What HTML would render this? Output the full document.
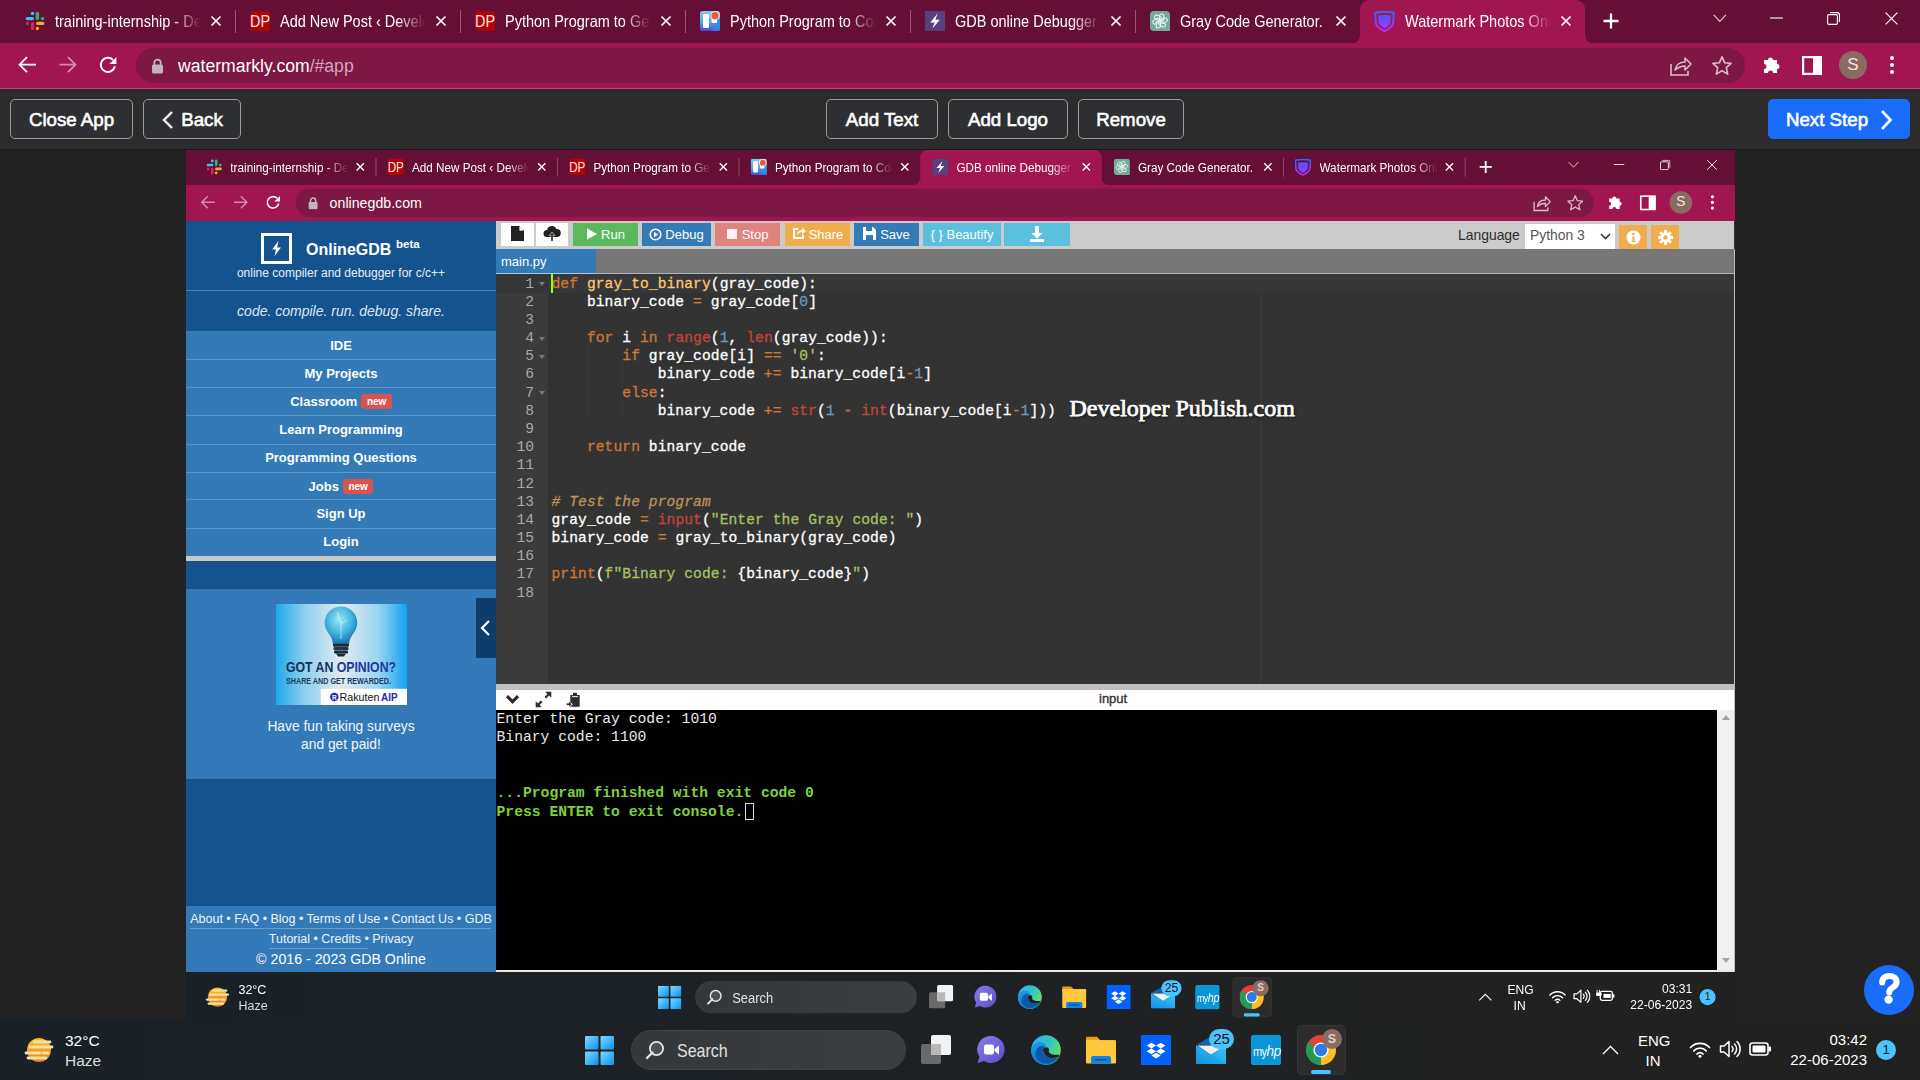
<!DOCTYPE html>
<html><head><meta charset="utf-8"><title>recreation</title>
<style>
*{box-sizing:border-box;margin:0;padding:0}
html,body{width:1920px;height:1080px;overflow:hidden;background:#222;font-family:"Liberation Sans",sans-serif}
.abs{position:absolute}
.ic{position:absolute}
.scr{position:absolute;left:0;top:0;width:1920px;height:1080px;overflow:hidden}
.tabstrip{position:absolute;left:0;top:0;width:1920px;height:43px;background:#650e36}
.tab{position:absolute;top:0;height:42px;width:225px}
.tab .fav{position:absolute;left:15px;top:11px;width:20px;height:20px}
.tab .ttl{position:absolute;left:45px;top:11px;width:146px;height:22px;overflow:hidden;white-space:nowrap;color:#fff;font-size:16.4px;line-height:20px;
  -webkit-mask-image:linear-gradient(90deg,#000 80%,transparent 100%)}
.tab .ttl span{display:inline-block;transform:scaleX(0.885);transform-origin:0 0}
.tab .x{position:absolute;left:199px;top:14px;width:14px;height:14px}
.tab .sep{position:absolute;left:0px;top:10px;width:1px;height:23px;background:#9b5a78}
.tab.active{background:#a11550;border-radius:9px 9px 0 0;height:44px}
.tab.active:before,.tab.active:after{content:"";position:absolute;bottom:0;width:9px;height:9px}
.tab.active:before{left:-9px;background:radial-gradient(circle at 0 0,transparent 8.5px,#a11550 9px)}
.tab.active:after{right:-9px;background:radial-gradient(circle at 100% 0,transparent 8.5px,#a11550 9px)}
.toolbar{position:absolute;left:0;top:43px;width:1920px;height:45px;background:#a11550}
.tbline{position:absolute;left:0;top:88px;width:1920px;height:1px;background:#c04479}
.omni{position:absolute;left:136px;top:5px;width:1609px;height:35px;border-radius:18px;background:#7c1843}
.url{position:absolute;left:178px;top:12px;font-size:17.6px;color:#fff;line-height:22px;white-space:nowrap}
.url span{color:#d4a5ba}
.taskbar{position:absolute;left:0;top:1020px;width:1920px;height:60px;background:linear-gradient(90deg,#1a2126 0%,#1c2125 35%,#202122 65%,#212121 100%)}
.tb-txt{position:absolute;color:#fff;font-size:15px;line-height:19px;white-space:nowrap}
.btn{position:absolute;top:10px;height:40px;border:1px solid #9c9c9c;border-radius:5px;background:#2e2f32;color:#fff;font-size:18.7px;font-weight:400;-webkit-text-stroke:0.6px #fff;line-height:39px;text-align:center;white-space:nowrap}
</style></head>
<body>
<div class="scr" id="outer">
<div class="tabstrip">
<div class="tab" style="left:10px"><svg class="fav" viewBox="0 0 20 20"><g stroke-linecap="round" stroke-width="3.3"><path d="M2.3 7.6h5" stroke="#36c5f0"/><path d="M12.4 2.3v5" stroke="#2eb67d"/><path d="M12.7 12.4h5" stroke="#ecb22e"/><path d="M7.6 12.7v5" stroke="#e01e5a"/></g><circle cx="7.6" cy="2.5" r="1.7" fill="#36c5f0"/><circle cx="17.5" cy="7.6" r="1.7" fill="#2eb67d"/><circle cx="12.4" cy="17.5" r="1.7" fill="#ecb22e"/><circle cx="2.5" cy="12.4" r="1.7" fill="#e01e5a"/></svg><div class="ttl"><span>training-internship - Dev</span></div><svg class="x" viewBox="0 0 14 14"><path d="M2.5 2.5l9 9M11.5 2.5l-9 9" stroke="#fff" stroke-width="1.7"/></svg></div>
<div class="tab" style="left:235px"><div class="sep"></div><svg class="fav" viewBox="0 0 20 20" overflow="visible"><rect width="20" height="20" rx="2.5" fill="#b00506"/><text x="0" y="16.2" font-size="17" fill="#ffe4e4" font-family="Liberation Sans" textLength="20" lengthAdjust="spacingAndGlyphs">DP</text></svg><div class="ttl"><span>Add New Post ‹ Develop</span></div><svg class="x" viewBox="0 0 14 14"><path d="M2.5 2.5l9 9M11.5 2.5l-9 9" stroke="#fff" stroke-width="1.7"/></svg></div>
<div class="tab" style="left:460px"><div class="sep"></div><svg class="fav" viewBox="0 0 20 20" overflow="visible"><rect width="20" height="20" rx="2.5" fill="#b00506"/><text x="0" y="16.2" font-size="17" fill="#ffe4e4" font-family="Liberation Sans" textLength="20" lengthAdjust="spacingAndGlyphs">DP</text></svg><div class="ttl"><span>Python Program to Gen</span></div><svg class="x" viewBox="0 0 14 14"><path d="M2.5 2.5l9 9M11.5 2.5l-9 9" stroke="#fff" stroke-width="1.7"/></svg></div>
<div class="tab" style="left:685px"><div class="sep"></div><svg class="fav" viewBox="0 0 20 20"><defs><linearGradient id="pyg1" x1="0" y1="0" x2="0" y2="1"><stop offset="0" stop-color="#80cfe2"/><stop offset="0.55" stop-color="#5aa9dc"/><stop offset="1" stop-color="#4a40e2"/></linearGradient><linearGradient id="pyg2" x1="0" y1="0" x2="1" y2="0"><stop offset="0" stop-color="#2f8fe2" stop-opacity="0"/><stop offset="1" stop-color="#2a90e0"/></linearGradient></defs><rect width="20" height="20" rx="2.5" fill="url(#pyg1)"/><rect x="8" y="6" width="12" height="14" rx="2.5" fill="url(#pyg2)"/><rect x="3" y="3" width="6" height="14" rx="1.2" fill="#fff"/><rect x="11.5" y="6" width="5.5" height="6" rx="1" fill="#fff"/><circle cx="15" cy="4.8" r="4.6" fill="#fff"/><circle cx="15" cy="4.8" r="3.7" fill="#ea5a40"/></svg><div class="ttl"><span>Python Program to Conv</span></div><svg class="x" viewBox="0 0 14 14"><path d="M2.5 2.5l9 9M11.5 2.5l-9 9" stroke="#fff" stroke-width="1.7"/></svg></div>
<div class="tab" style="left:910px"><div class="sep"></div><svg class="fav" viewBox="0 0 20 20"><rect width="20" height="20" fill="#58407f"/><path d="M12.6 2.6L5.2 11.4h4.4L7.4 17.4l7.4-8.6h-4.4z" fill="#fff"/></svg><div class="ttl"><span>GDB online Debugger</span></div><svg class="x" viewBox="0 0 14 14"><path d="M2.5 2.5l9 9M11.5 2.5l-9 9" stroke="#fff" stroke-width="1.7"/></svg></div>
<div class="tab" style="left:1135px"><div class="sep"></div><svg class="fav" viewBox="0 0 20 20"><path d="M4 0h12a4 4 0 0 1 4 4v16H4a4 4 0 0 1-4-4V4a4 4 0 0 1 4-4z" fill="#74aa9c"/><g fill="none" stroke="#eef5f3" stroke-width="1.05"><rect x="9.6" y="3" width="4.2" height="7.2" rx="2.1" transform="rotate(0 10 10)"/><rect x="9.6" y="3" width="4.2" height="7.2" rx="2.1" transform="rotate(60 10 10)"/><rect x="9.6" y="3" width="4.2" height="7.2" rx="2.1" transform="rotate(120 10 10)"/><rect x="9.6" y="3" width="4.2" height="7.2" rx="2.1" transform="rotate(180 10 10)"/><rect x="9.6" y="3" width="4.2" height="7.2" rx="2.1" transform="rotate(240 10 10)"/><rect x="9.6" y="3" width="4.2" height="7.2" rx="2.1" transform="rotate(300 10 10)"/></g></svg><div class="ttl" style="-webkit-mask-image:none"><span>Gray Code Generator.</span></div><svg class="x" viewBox="0 0 14 14"><path d="M2.5 2.5l9 9M11.5 2.5l-9 9" stroke="#fff" stroke-width="1.7"/></svg></div>
<div class="tab active" style="left:1360px"><svg class="fav" viewBox="0 0 21 21" style="left:14px;top:10.5px;width:21px;height:21px"><defs><linearGradient id="shgo" x1="0" y1="0" x2="0" y2="1"><stop offset="0" stop-color="#2a6bff"/><stop offset="1" stop-color="#c02cff"/></linearGradient><linearGradient id="shho" x1="0" y1="0" x2="0" y2="1"><stop offset="0" stop-color="#4d56ff"/><stop offset="1" stop-color="#9a3cff"/></linearGradient></defs><path d="M1.3 1.8Q10.5 -0.2 19.7 1.8L19.2 12.2Q18.2 16.2 10.5 20.2Q2.8 16.2 1.8 12.2Z" fill="none" stroke="url(#shgo)" stroke-width="1.9"/><path d="M4.3 4.6Q10.5 3.6 16.7 4.6L16.4 11.6Q15.7 14.6 10.5 17.4Q5.3 14.6 4.6 11.6Z" fill="url(#shho)"/></svg><div class="ttl"><span>Watermark Photos Onli</span></div><svg class="x" viewBox="0 0 14 14"><path d="M2.5 2.5l9 9M11.5 2.5l-9 9" stroke="#fff" stroke-width="1.7"/></svg></div>
<svg class="ic" style="left:1601px;top:11px" width="20" height="20" viewBox="0 0 20 20"><path d="M10 2.5v15M2.5 10h15" stroke="#fff" stroke-width="2.3"/></svg>
<svg class="ic" style="left:1712.5px;top:14px" width="14" height="9" viewBox="0 0 14 9"><path d="M0.7 0.8L6.8 7.4L12.9 0.8" stroke="#e6c3d3" stroke-width="1.2" fill="none"/></svg>
<svg class="ic" style="left:1770px;top:17px" width="13" height="2" viewBox="0 0 13 2"><path d="M0 1h13" stroke="#fff" stroke-width="1.1"/></svg>
<svg class="ic" style="left:1827px;top:12px" width="13" height="13" viewBox="0 0 13 13"><rect x="0.6" y="2.6" width="9.8" height="9.8" rx="1.3" fill="none" stroke="#fff" stroke-width="1.1"/><path d="M3 0.6H10.2A2.2 2.2 0 0 1 12.4 2.8V10" fill="none" stroke="#fff" stroke-width="1.1"/></svg>
<svg class="ic" style="left:1884.5px;top:12px" width="13" height="13" viewBox="0 0 13 13"><path d="M0.6 0.6l11.8 11.8M12.4 0.6l-11.8 11.8" stroke="#fff" stroke-width="1.15"/></svg>
</div>
<div class="toolbar">
<svg class="ic" style="left:17px;top:12px" width="22" height="20" viewBox="0 0 22 20"><path d="M19 9.7H3.2M10 2.2L2.5 9.7L10 17.2" stroke="#fff" stroke-width="1.8" fill="none"/></svg>
<svg class="ic" style="left:57px;top:12px" width="22" height="20" viewBox="0 0 22 20"><path d="M2.5 9.7H18.3M11 2.2L18.5 9.7L11 17.2" stroke="#d98aab" stroke-width="1.8" fill="none"/></svg>
<svg class="ic" style="left:98px;top:12px" width="21" height="20" viewBox="0 0 21 20"><path d="M15 4.9A7.1 7.1 0 1 0 16.9 11.3" stroke="#fff" stroke-width="1.9" fill="none"/><path d="M18.4 2V8.9H11.5z" fill="#fff"/></svg>
<div class="omni">
<svg class="ic" style="left:15px;top:10px" width="13" height="16" viewBox="0 0 13 16"><path d="M3.3 7V4.8a3.2 3.2 0 0 1 6.4 0V7" stroke="#c4b5bd" stroke-width="1.8" fill="none"/><rect x="1" y="6.5" width="11" height="9" rx="1.5" fill="#c4b5bd"/></svg>
<svg class="ic" style="left:1533px;top:7px" width="24" height="22" viewBox="0 0 24 22"><path d="M2 9v11h17v-4" stroke="#dcbccb" stroke-width="1.6" fill="none"/><path d="M6 15c1-5 5-8 10-8V3l6 6-6 6v-4c-4 0-7 1.5-10 4z" stroke="#dcbccb" stroke-width="1.6" fill="none" stroke-linejoin="round"/></svg>
<svg class="ic" style="left:1575px;top:7px" width="22" height="22" viewBox="0 0 22 22"><path d="M11 1.8l2.7 6 6.4.6-4.8 4.3 1.4 6.4L11 15.8l-5.7 3.3 1.4-6.4L1.9 8.4l6.4-.6z" stroke="#dcbccb" stroke-width="1.6" fill="none" stroke-linejoin="round"/></svg>
</div>
<svg class="ic" style="left:1761px;top:11px" width="22" height="22" viewBox="0 0 22 22"><path d="M3 6h4a2.5 2.5 0 1 1 5 0h4v4a2.5 2.5 0 1 1 0 5v4h-4a2.5 2.5 0 1 0-5 0H3v-4a2.5 2.5 0 1 0 0-5z" fill="#fff"/></svg>
<svg class="ic" style="left:1802px;top:13px" width="20" height="19" viewBox="0 0 20 19"><rect x="1.1" y="1.1" width="17.8" height="16.8" fill="none" stroke="#fff" stroke-width="2.2"/><rect x="11" y="1" width="8" height="17" fill="#fff"/></svg>
<div class="abs" style="left:1839px;top:8px;width:28px;height:28px;border-radius:50%;background:#8a6b62;color:#f2e6e0;font-size:17px;line-height:28px;text-align:center">S</div>
<svg class="ic" style="left:1889px;top:12px" width="6" height="20" viewBox="0 0 6 20"><circle cx="3" cy="3" r="2" fill="#fff"/><circle cx="3" cy="10" r="2" fill="#fff"/><circle cx="3" cy="17" r="2" fill="#fff"/></svg>
<div class="url">watermarkly.com<span>/#app</span></div>
</div>
<div class="tbline"></div>
<div class="abs" style="left:0;top:89px;width:1920px;height:61px;background:#2c2c2c;border-bottom:1px solid #171918">
<div class="btn" style="left:10px;width:123px">Close App</div>
<div class="btn" style="left:143px;width:98px;padding-left:20px"><svg class="ic" style="left:17px;top:10px" width="14" height="20" viewBox="0 0 14 20"><path d="M11 2L3 10l8 8" stroke="#fff" stroke-width="2.4" fill="none"/></svg>Back</div>
<div class="btn" style="left:826px;width:112px">Add Text</div>
<div class="btn" style="left:948px;width:120px">Add Logo</div>
<div class="btn" style="left:1078px;width:106px">Remove</div>
<div class="btn" style="left:1768px;width:142px;background:#1a6dfb;border-color:#1a6dfb;padding-right:24px">Next Step<svg class="ic" style="left:110px;top:9px" width="14" height="22" viewBox="0 0 14 22"><path d="M3 2l8.5 9-8.5 9" stroke="#fff" stroke-width="2.6" fill="none"/></svg></div>
</div>
<div class="abs" style="left:0;top:150px;width:1920px;height:870px;background:#222"></div>
<div class="scr" id="inner" style="left:186px;top:150px;transform:scale(0.8067708333333333);transform-origin:0 0;height:1080px">
<div class="tabstrip">
<div class="tab" style="left:10px"><svg class="fav" viewBox="0 0 20 20"><g stroke-linecap="round" stroke-width="3.3"><path d="M2.3 7.6h5" stroke="#36c5f0"/><path d="M12.4 2.3v5" stroke="#2eb67d"/><path d="M12.7 12.4h5" stroke="#ecb22e"/><path d="M7.6 12.7v5" stroke="#e01e5a"/></g><circle cx="7.6" cy="2.5" r="1.7" fill="#36c5f0"/><circle cx="17.5" cy="7.6" r="1.7" fill="#2eb67d"/><circle cx="12.4" cy="17.5" r="1.7" fill="#ecb22e"/><circle cx="2.5" cy="12.4" r="1.7" fill="#e01e5a"/></svg><div class="ttl"><span>training-internship - Dev</span></div><svg class="x" viewBox="0 0 14 14"><path d="M2.5 2.5l9 9M11.5 2.5l-9 9" stroke="#fff" stroke-width="1.7"/></svg></div>
<div class="tab" style="left:235px"><div class="sep"></div><svg class="fav" viewBox="0 0 20 20" overflow="visible"><rect width="20" height="20" rx="2.5" fill="#b00506"/><text x="0" y="16.2" font-size="17" fill="#ffe4e4" font-family="Liberation Sans" textLength="20" lengthAdjust="spacingAndGlyphs">DP</text></svg><div class="ttl"><span>Add New Post ‹ Develop</span></div><svg class="x" viewBox="0 0 14 14"><path d="M2.5 2.5l9 9M11.5 2.5l-9 9" stroke="#fff" stroke-width="1.7"/></svg></div>
<div class="tab" style="left:460px"><div class="sep"></div><svg class="fav" viewBox="0 0 20 20" overflow="visible"><rect width="20" height="20" rx="2.5" fill="#b00506"/><text x="0" y="16.2" font-size="17" fill="#ffe4e4" font-family="Liberation Sans" textLength="20" lengthAdjust="spacingAndGlyphs">DP</text></svg><div class="ttl"><span>Python Program to Gen</span></div><svg class="x" viewBox="0 0 14 14"><path d="M2.5 2.5l9 9M11.5 2.5l-9 9" stroke="#fff" stroke-width="1.7"/></svg></div>
<div class="tab" style="left:685px"><div class="sep"></div><svg class="fav" viewBox="0 0 20 20"><defs><linearGradient id="pyg1" x1="0" y1="0" x2="0" y2="1"><stop offset="0" stop-color="#80cfe2"/><stop offset="0.55" stop-color="#5aa9dc"/><stop offset="1" stop-color="#4a40e2"/></linearGradient><linearGradient id="pyg2" x1="0" y1="0" x2="1" y2="0"><stop offset="0" stop-color="#2f8fe2" stop-opacity="0"/><stop offset="1" stop-color="#2a90e0"/></linearGradient></defs><rect width="20" height="20" rx="2.5" fill="url(#pyg1)"/><rect x="8" y="6" width="12" height="14" rx="2.5" fill="url(#pyg2)"/><rect x="3" y="3" width="6" height="14" rx="1.2" fill="#fff"/><rect x="11.5" y="6" width="5.5" height="6" rx="1" fill="#fff"/><circle cx="15" cy="4.8" r="4.6" fill="#fff"/><circle cx="15" cy="4.8" r="3.7" fill="#ea5a40"/></svg><div class="ttl"><span>Python Program to Conv</span></div><svg class="x" viewBox="0 0 14 14"><path d="M2.5 2.5l9 9M11.5 2.5l-9 9" stroke="#fff" stroke-width="1.7"/></svg></div>
<div class="tab active" style="left:910px"><svg class="fav" viewBox="0 0 20 20"><rect width="20" height="20" fill="#58407f"/><path d="M12.6 2.6L5.2 11.4h4.4L7.4 17.4l7.4-8.6h-4.4z" fill="#fff"/></svg><div class="ttl"><span>GDB online Debugger</span></div><svg class="x" viewBox="0 0 14 14"><path d="M2.5 2.5l9 9M11.5 2.5l-9 9" stroke="#fff" stroke-width="1.7"/></svg></div>
<div class="tab" style="left:1135px"><svg class="fav" viewBox="0 0 20 20"><path d="M4 0h12a4 4 0 0 1 4 4v16H4a4 4 0 0 1-4-4V4a4 4 0 0 1 4-4z" fill="#74aa9c"/><g fill="none" stroke="#eef5f3" stroke-width="1.05"><rect x="9.6" y="3" width="4.2" height="7.2" rx="2.1" transform="rotate(0 10 10)"/><rect x="9.6" y="3" width="4.2" height="7.2" rx="2.1" transform="rotate(60 10 10)"/><rect x="9.6" y="3" width="4.2" height="7.2" rx="2.1" transform="rotate(120 10 10)"/><rect x="9.6" y="3" width="4.2" height="7.2" rx="2.1" transform="rotate(180 10 10)"/><rect x="9.6" y="3" width="4.2" height="7.2" rx="2.1" transform="rotate(240 10 10)"/><rect x="9.6" y="3" width="4.2" height="7.2" rx="2.1" transform="rotate(300 10 10)"/></g></svg><div class="ttl" style="-webkit-mask-image:none"><span>Gray Code Generator.</span></div><svg class="x" viewBox="0 0 14 14"><path d="M2.5 2.5l9 9M11.5 2.5l-9 9" stroke="#fff" stroke-width="1.7"/></svg></div>
<div class="tab" style="left:1360px"><div class="sep"></div><svg class="fav" viewBox="0 0 21 21" style="left:14px;top:10.5px;width:21px;height:21px"><defs><linearGradient id="shgi" x1="0" y1="0" x2="0" y2="1"><stop offset="0" stop-color="#2a6bff"/><stop offset="1" stop-color="#c02cff"/></linearGradient><linearGradient id="shhi" x1="0" y1="0" x2="0" y2="1"><stop offset="0" stop-color="#4d56ff"/><stop offset="1" stop-color="#9a3cff"/></linearGradient></defs><path d="M1.3 1.8Q10.5 -0.2 19.7 1.8L19.2 12.2Q18.2 16.2 10.5 20.2Q2.8 16.2 1.8 12.2Z" fill="none" stroke="url(#shgi)" stroke-width="1.9"/><path d="M4.3 4.6Q10.5 3.6 16.7 4.6L16.4 11.6Q15.7 14.6 10.5 17.4Q5.3 14.6 4.6 11.6Z" fill="url(#shhi)"/></svg><div class="ttl"><span>Watermark Photos Onli</span></div><svg class="x" viewBox="0 0 14 14"><path d="M2.5 2.5l9 9M11.5 2.5l-9 9" stroke="#fff" stroke-width="1.7"/></svg></div>
<div class="tab" style="left:1585px;width:4px"><div class="sep"></div></div>
<svg class="ic" style="left:1601px;top:11px" width="20" height="20" viewBox="0 0 20 20"><path d="M10 2.5v15M2.5 10h15" stroke="#fff" stroke-width="2.3"/></svg>
<svg class="ic" style="left:1712.5px;top:14px" width="14" height="9" viewBox="0 0 14 9"><path d="M0.7 0.8L6.8 7.4L12.9 0.8" stroke="#e6c3d3" stroke-width="1.2" fill="none"/></svg>
<svg class="ic" style="left:1770px;top:17px" width="13" height="2" viewBox="0 0 13 2"><path d="M0 1h13" stroke="#fff" stroke-width="1.1"/></svg>
<svg class="ic" style="left:1827px;top:12px" width="13" height="13" viewBox="0 0 13 13"><rect x="0.6" y="2.6" width="9.8" height="9.8" rx="1.3" fill="none" stroke="#fff" stroke-width="1.1"/><path d="M3 0.6H10.2A2.2 2.2 0 0 1 12.4 2.8V10" fill="none" stroke="#fff" stroke-width="1.1"/></svg>
<svg class="ic" style="left:1884.5px;top:12px" width="13" height="13" viewBox="0 0 13 13"><path d="M0.6 0.6l11.8 11.8M12.4 0.6l-11.8 11.8" stroke="#fff" stroke-width="1.15"/></svg>
</div>
<div class="toolbar">
<svg class="ic" style="left:17px;top:12px" width="22" height="20" viewBox="0 0 22 20"><path d="M19 9.7H3.2M10 2.2L2.5 9.7L10 17.2" stroke="#d98aab" stroke-width="1.8" fill="none"/></svg>
<svg class="ic" style="left:57px;top:12px" width="22" height="20" viewBox="0 0 22 20"><path d="M2.5 9.7H18.3M11 2.2L18.5 9.7L11 17.2" stroke="#d98aab" stroke-width="1.8" fill="none"/></svg>
<svg class="ic" style="left:98px;top:12px" width="21" height="20" viewBox="0 0 21 20"><path d="M15 4.9A7.1 7.1 0 1 0 16.9 11.3" stroke="#fff" stroke-width="1.9" fill="none"/><path d="M18.4 2V8.9H11.5z" fill="#fff"/></svg>
<div class="omni">
<svg class="ic" style="left:15px;top:10px" width="13" height="16" viewBox="0 0 13 16"><path d="M3.3 7V4.8a3.2 3.2 0 0 1 6.4 0V7" stroke="#c4b5bd" stroke-width="1.8" fill="none"/><rect x="1" y="6.5" width="11" height="9" rx="1.5" fill="#c4b5bd"/></svg>
<svg class="ic" style="left:1533px;top:7px" width="24" height="22" viewBox="0 0 24 22"><path d="M2 9v11h17v-4" stroke="#dcbccb" stroke-width="1.6" fill="none"/><path d="M6 15c1-5 5-8 10-8V3l6 6-6 6v-4c-4 0-7 1.5-10 4z" stroke="#dcbccb" stroke-width="1.6" fill="none" stroke-linejoin="round"/></svg>
<svg class="ic" style="left:1575px;top:7px" width="22" height="22" viewBox="0 0 22 22"><path d="M11 1.8l2.7 6 6.4.6-4.8 4.3 1.4 6.4L11 15.8l-5.7 3.3 1.4-6.4L1.9 8.4l6.4-.6z" stroke="#dcbccb" stroke-width="1.6" fill="none" stroke-linejoin="round"/></svg>
</div>
<svg class="ic" style="left:1761px;top:11px" width="22" height="22" viewBox="0 0 22 22"><path d="M3 6h4a2.5 2.5 0 1 1 5 0h4v4a2.5 2.5 0 1 1 0 5v4h-4a2.5 2.5 0 1 0-5 0H3v-4a2.5 2.5 0 1 0 0-5z" fill="#fff"/></svg>
<svg class="ic" style="left:1802px;top:13px" width="20" height="19" viewBox="0 0 20 19"><rect x="1.1" y="1.1" width="17.8" height="16.8" fill="none" stroke="#fff" stroke-width="2.2"/><rect x="11" y="1" width="8" height="17" fill="#fff"/></svg>
<div class="abs" style="left:1839px;top:8px;width:28px;height:28px;border-radius:50%;background:#8a6b62;color:#f2e6e0;font-size:17px;line-height:28px;text-align:center">S</div>
<svg class="ic" style="left:1889px;top:12px" width="6" height="20" viewBox="0 0 6 20"><circle cx="3" cy="3" r="2" fill="#fff"/><circle cx="3" cy="10" r="2" fill="#fff"/><circle cx="3" cy="17" r="2" fill="#fff"/></svg>
<div class="url">onlinegdb.com<span></span></div>
</div>
<div class="tbline"></div>
<div class="taskbar"></div>
<svg class="ic" style="left:22px;top:1034px" width="34" height="32" viewBox="0 0 34 32"><defs><linearGradient id="sun31" x1="0" y1="0" x2="0" y2="1"><stop offset="0" stop-color="#ffc21a"/><stop offset="1" stop-color="#f07b12"/></linearGradient></defs><circle cx="17" cy="16" r="12" fill="url(#sun31)"/><g stroke-linecap="round" stroke-width="2.8" stroke="#f3dfb0"><path d="M12 8h16M8 13h22M4 19h14M21 19h5M6 24h18"/></g></svg>
<div class="tb-txt" style="left:65px;top:1031px;font-size:15.5px">32°C</div>
<div class="tb-txt" style="left:65px;top:1051px;font-size:15.5px;color:#dcdcdc">Haze</div>
<svg class="ic" style="left:585px;top:1036px" width="29" height="29" viewBox="0 0 29 29"><defs><linearGradient id="win31" x1="0" y1="0" x2="1" y2="1"><stop offset="0" stop-color="#7fdcff"/><stop offset="1" stop-color="#0a8df0"/></linearGradient></defs><g fill="url(#win31)"><rect x="0" y="0" width="13.5" height="13.5" rx="1"/><rect x="15.5" y="0" width="13.5" height="13.5" rx="1"/><rect x="0" y="15.5" width="13.5" height="13.5" rx="1"/><rect x="15.5" y="15.5" width="13.5" height="13.5" rx="1"/></g></svg>
<div class="abs" style="left:631px;top:1030px;width:275px;height:40px;border-radius:20px;background:linear-gradient(90deg,#34383b,#3c3d3f);border:1px solid #3f4244"></div>
<svg class="ic" style="left:644px;top:1039px" width="22" height="22" viewBox="0 0 22 22"><circle cx="12.5" cy="9.5" r="6.6" fill="#4e5052" stroke="#e6e6e6" stroke-width="1.8"/><path d="M8.5 13.5L3 19" stroke="#e6e6e6" stroke-width="2.4" stroke-linecap="round"/></svg>
<div class="tb-txt" style="left:677px;top:1041px;font-size:18.5px;color:#e0e0e0;transform:scaleX(0.865);transform-origin:0 0">Search</div>
<svg class="ic" style="left:921px;top:1035px" width="30" height="29" viewBox="0 0 30 29"><rect x="0" y="9" width="20" height="20" rx="2" fill="#6a6a6a"/><rect x="10" y="0" width="20" height="20" rx="2" fill="#f2f2f2"/><rect x="10" y="9" width="10" height="11" fill="#b9b9b9"/></svg>
<svg class="ic" style="left:976px;top:1035px" width="29" height="29" viewBox="0 0 29 29"><defs><linearGradient id="tm31" x1="0" y1="0" x2="1" y2="1"><stop offset="0" stop-color="#8a7ce8"/><stop offset="1" stop-color="#5a4fc8"/></linearGradient></defs><path d="M15 1a13.5 13.5 0 1 1-7 25L1.5 28l2-6A13.5 13.5 0 0 1 15 1z" fill="url(#tm31)"/><rect x="8" y="9.5" width="10" height="10" rx="2" fill="#fff"/><path d="M18.5 14l4.5-3.5v9L18.5 16z" fill="#fff"/></svg>
<svg class="ic" style="left:1031px;top:1035px" width="30" height="30" viewBox="0 0 30 30"><defs><linearGradient id="eg131" x1="0" y1="0.2" x2="1" y2="0.7"><stop offset="0" stop-color="#30b3f3"/><stop offset=".5" stop-color="#2ec5c4"/><stop offset="1" stop-color="#6ee55a"/></linearGradient><linearGradient id="eg231" x1="0" y1="0" x2="0.4" y2="1"><stop offset="0" stop-color="#1f9be9"/><stop offset="1" stop-color="#0f73d6"/></linearGradient></defs><circle cx="15" cy="15" r="14.8" fill="url(#eg131)"/><path d="M12 15.3A3 3 0 0 1 18 15.3C18 16 17.8 16.6 17.5 17C19.5 19.5 23 20.3 28.6 19.6L27.8 21.8C23.5 23.6 19.5 23.8 16.8 22.2C14.5 20.8 13.3 19 12.6 17.2C12.2 16.6 12 16 12 15.3z" fill="#1f1f1f"/><path d="M0.2 16.5C0.2 10 4.5 7 9.2 7C13 7 15.3 9.5 15.3 12.3C13.5 12.3 12 13.6 12 15.3C12 16 12.2 16.6 12.6 17.2C13.3 19 14.5 20.8 16.8 22.2C19.5 23.8 23.5 23.6 27.8 21.8C25 27 20.2 29.8 15 29.8C6.8 29.8 0.2 23.5 0.2 16.5z" fill="url(#eg231)"/><path d="M11 11C7.5 11 4.6 14.2 4.6 18.8C4.6 24.2 9.4 28.6 15.4 28.6C20.2 28.6 24.4 26 27.8 21.8C23.5 23.6 19.5 23.8 16.8 22.2C14.5 20.8 13.3 19 12.6 17.2C12.2 16.6 12 16 12 15.3C12 13.8 12.8 12.6 13.8 12.2C13 11.4 12 11 11 11z" fill="#0c57a6"/></svg>
<svg class="ic" style="left:1086px;top:1036px" width="30" height="28" viewBox="0 0 30 28"><path d="M0 2.2A1.5 1.5 0 0 1 1.5 0.8H11l3 3.2H28.5A1.5 1.5 0 0 1 30 5.5V9H0z" fill="#e3a20a"/><path d="M0 5A1.2 1.2 0 0 1 1.2 3.8H12.5L14.5 4.3H28.8A1.2 1.2 0 0 1 30 5.5V26.2A1.2 1.2 0 0 1 28.8 27.4H1.2A1.2 1.2 0 0 1 0 26.2z" fill="#ffc83d"/><path d="M5 22A2 2 0 0 1 7 20H23A2 2 0 0 1 25 22V27.4H5z" fill="#1283e0"/><rect x="8.5" y="23" width="13" height="1.6" rx="0.8" fill="#0a4fa0"/></svg>
<svg class="ic" style="left:1141px;top:1035px" width="30" height="30" viewBox="0 0 30 30"><rect width="30" height="30" fill="#0061fe"/><path d="M5.7 10.6L10.4 7.699999999999999L15.1 10.6L10.4 13.5zM15.1 10.6L19.8 7.699999999999999L24.5 10.6L19.8 13.5zM5.7 16.3L10.4 13.4L15.1 16.3L10.4 19.2zM15.1 16.3L19.8 13.4L24.5 16.3L19.8 19.2zM10.4 20.6L15.1 17.700000000000003L19.8 20.6L15.1 23.5z" fill="#fff"/></svg>
<svg class="ic" style="left:1196px;top:1035px" width="30" height="29" viewBox="0 0 30 29"><defs><linearGradient id="ml31" x1="1" y1="0" x2="0" y2="1"><stop offset="0" stop-color="#3bc8f5"/><stop offset="0.6" stop-color="#22a8ea"/><stop offset="1" stop-color="#1590de"/></linearGradient></defs><path d="M0 10L15 1.5L30 10z" fill="#0b63b6"/><path d="M1.5 10.5H20L27 14.5L15 20z" fill="#f0f0f0"/><path d="M0 10L15 19.5L30 10V29H0z" fill="url(#ml31)"/><path d="M15 19.5L30 29H0z" fill="#1a9ae2" opacity="0.35"/></svg>
<div class="abs" style="left:1209px;top:1029px;width:25px;height:20px;border-radius:10px;background:#4cc2ff;color:#111;font-size:15px;line-height:20px;text-align:center">25</div>
<div class="abs" style="left:1251px;top:1035px;width:30px;height:30px;background:#0a95d6;border-radius:2px"></div>
<div class="tb-txt" style="left:1253px;top:1039.5px;font-size:11px;color:#f4f9fc;letter-spacing:-0.6px;transform:scaleY(1.15);transform-origin:0 0">my<span style="font-style:italic;font-size:13.5px;letter-spacing:-0.3px">hp</span></div>
<div class="abs" style="left:1297px;top:1025px;width:49px;height:50px;border-radius:5px;background:#2c2c2c;border:1px solid #353535"></div>
<svg class="ic" style="left:1306px;top:1035px" width="30" height="30" viewBox="0 0 30 30"><circle cx="15" cy="15" r="15" fill="#db4437"/><path d="M15 15L27.99 7.5A15 15 0 0 1 15 30z" fill="#f6c026"/><path d="M15 15L15 30A15 15 0 0 1 2.01 7.5z" fill="#1f9d55"/><circle cx="15" cy="15" r="7.6" fill="#fff"/><circle cx="15" cy="15" r="6.2" fill="#2f7bea"/></svg>
<div class="abs" style="left:1322px;top:1029px;width:20px;height:20px;border-radius:50%;background:#8b6c62;color:#ddd2cc;font-size:12.5px;font-weight:700;line-height:20px;text-align:center">S</div>
<div class="abs" style="left:1311px;top:1070px;width:20px;height:4px;border-radius:2px;background:#4cc2ff"></div>
<svg class="ic" style="left:1602px;top:1045px" width="17" height="10" viewBox="0 0 17 10"><path d="M1 9l7.5-7.5L16 9" stroke="#fff" stroke-width="1.3" fill="none"/></svg>
<div class="tb-txt" style="left:1638px;top:1031px;font-size:15px;text-align:center;width:30px">ENG</div>
<div class="tb-txt" style="left:1638px;top:1051px;font-size:15px;text-align:center;width:30px">IN</div>
<svg class="ic" style="left:1689px;top:1041px" width="22" height="17" viewBox="0 0 22 17"><g fill="none" stroke="#fff" stroke-width="1.7" stroke-linecap="round"><path d="M1.5 6.5a13 13 0 0 1 19 0"/><path d="M4.8 9.8a8.5 8.5 0 0 1 12.4 0"/><path d="M8 13a4 4 0 0 1 6 0"/></g><circle cx="11" cy="15.3" r="1.5" fill="#fff"/></svg>
<svg class="ic" style="left:1719px;top:1039px" width="22" height="20" viewBox="0 0 22 20"><path d="M1.5 7h3.5l5-4.5v15L5 13H1.5z" fill="none" stroke="#fff" stroke-width="1.5" stroke-linejoin="round"/><g fill="none" stroke="#fff" stroke-width="1.5" stroke-linecap="round"><path d="M13 7.5a3.5 3.5 0 0 1 0 5"/><path d="M15.5 5a7 7 0 0 1 0 10"/><path d="M18 2.5a10.5 10.5 0 0 1 0 15"/></g></svg>
<svg class="ic" style="left:1748px;top:1040px" width="24" height="16" viewBox="0 0 24 16"><rect x="5" y="3" width="15" height="11" rx="2.2" fill="none" stroke="#fff" stroke-width="1.6"/><rect x="20.5" y="6.5" width="2" height="4" fill="#fff"/><rect x="9" y="6" width="9" height="5" fill="#fff"/><path d="M1 1v6M4 1v6M0 5h6v3H0z" stroke="#fff" stroke-width="1.2" fill="#fff"/></svg>
<div class="tb-txt" style="left:1790px;top:1030px;width:77px;text-align:right;font-size:15px">03:31</div>
<div class="tb-txt" style="left:1790px;top:1049.5px;width:77px;text-align:right;font-size:15px">22-06-2023</div>
<div class="abs" style="left:1876px;top:1040px;width:20px;height:20px;border-radius:50%;background:#4cc2ff;color:#0b1a26;font-size:13px;line-height:20px;text-align:center">1</div>
</div>
<div class="abs" id="gdb" style="left:186px;top:221px;width:1549px;height:751px;overflow:hidden;background:#323232">
<div class="abs" style="left:0.0px;top:0.0px;width:310.0px;height:751.0px;background:#15538f"></div>
<div class="abs" style="left:0.0px;top:69.0px;width:310.0px;height:1.0px;background:#4a7fb2"></div>
<div class="abs" style="left:75.0px;top:12.0px;width:31.0px;height:31.0px;border:3px solid #fff"></div>
<svg class="ic" style="left:82px;top:19px" width="17" height="17" viewBox="0 0 17 17"><path d="M10.5 1L4 9.5h4L6.5 16 13 7.5H9z" fill="#fff"/></svg>
<div class="abs" style="left:120.0px;top:20.0px;white-space:nowrap;color:#fff;font-size:16px;font-weight:700;line-height:18px">OnlineGDB</div>
<div class="abs" style="left:210.0px;top:16.0px;white-space:nowrap;color:#fff;font-size:11.5px;font-weight:700;line-height:14px">beta</div>
<div class="abs" style="left:0.0px;top:45.0px;width:310px;text-align:center;white-space:nowrap;color:#e8eef5;font-size:12px;line-height:15px">online compiler and debugger for c/c++</div>
<div class="abs" style="left:0.0px;top:82.0px;width:310px;text-align:center;white-space:nowrap;color:#dde7f1;font-size:14px;font-style:italic;line-height:17px">code. compile. run. debug. share.</div>
<div class="abs" style="left:0.0px;top:110.0px;width:310.0px;height:28.3px;background:#337ab7"></div>
<div class="abs" style="left:0.0px;top:138.3px;width:310.0px;height:1.0px;background:#5e97c9;z-index:1"></div>
<div class="abs" style="left:0.0px;top:116.5px;width:310px;text-align:center;white-space:nowrap;color:#fff;font-size:13px;font-weight:700;line-height:15px">IDE</div>
<div class="abs" style="left:0.0px;top:138.3px;width:310.0px;height:27.9px;background:#337ab7"></div>
<div class="abs" style="left:0.0px;top:166.2px;width:310.0px;height:1.0px;background:#5e97c9;z-index:1"></div>
<div class="abs" style="left:0.0px;top:144.8px;width:310px;text-align:center;white-space:nowrap;color:#fff;font-size:13px;font-weight:700;line-height:15px">My Projects</div>
<div class="abs" style="left:0.0px;top:166.2px;width:310.0px;height:28.2px;background:#337ab7"></div>
<div class="abs" style="left:0.0px;top:194.4px;width:310.0px;height:1.0px;background:#5e97c9;z-index:1"></div>
<div class="abs" style="left:0.0px;top:172.7px;width:310px;text-align:center;white-space:nowrap;color:#fff;font-size:13px;font-weight:700;line-height:15px">Classroom<span style="display:inline-block;margin-left:4px;background:#d9534f;color:#fff;font-size:10px;font-weight:700;line-height:15.5px;padding:0 5.5px;border-radius:3px;vertical-align:1px">new</span></div>
<div class="abs" style="left:0.0px;top:194.4px;width:310.0px;height:28.2px;background:#337ab7"></div>
<div class="abs" style="left:0.0px;top:222.6px;width:310.0px;height:1.0px;background:#5e97c9;z-index:1"></div>
<div class="abs" style="left:0.0px;top:200.9px;width:310px;text-align:center;white-space:nowrap;color:#fff;font-size:13px;font-weight:700;line-height:15px">Learn Programming</div>
<div class="abs" style="left:0.0px;top:222.6px;width:310.0px;height:28.4px;background:#337ab7"></div>
<div class="abs" style="left:0.0px;top:251.0px;width:310.0px;height:1.0px;background:#5e97c9;z-index:1"></div>
<div class="abs" style="left:0.0px;top:229.1px;width:310px;text-align:center;white-space:nowrap;color:#fff;font-size:13px;font-weight:700;line-height:15px">Programming Questions</div>
<div class="abs" style="left:0.0px;top:251.0px;width:310.0px;height:27.4px;background:#337ab7"></div>
<div class="abs" style="left:0.0px;top:278.4px;width:310.0px;height:1.0px;background:#5e97c9;z-index:1"></div>
<div class="abs" style="left:0.0px;top:257.5px;width:310px;text-align:center;white-space:nowrap;color:#fff;font-size:13px;font-weight:700;line-height:15px">Jobs<span style="display:inline-block;margin-left:4px;background:#d9534f;color:#fff;font-size:10px;font-weight:700;line-height:15.5px;padding:0 5.5px;border-radius:3px;vertical-align:1px">new</span></div>
<div class="abs" style="left:0.0px;top:278.4px;width:310.0px;height:28.2px;background:#337ab7"></div>
<div class="abs" style="left:0.0px;top:306.6px;width:310.0px;height:1.0px;background:#5e97c9;z-index:1"></div>
<div class="abs" style="left:0.0px;top:284.9px;width:310px;text-align:center;white-space:nowrap;color:#fff;font-size:13px;font-weight:700;line-height:15px">Sign Up</div>
<div class="abs" style="left:0.0px;top:306.6px;width:310.0px;height:28.4px;background:#337ab7"></div>
<div class="abs" style="left:0.0px;top:313.1px;width:310px;text-align:center;white-space:nowrap;color:#fff;font-size:13px;font-weight:700;line-height:15px">Login</div>
<div class="abs" style="left:0.0px;top:335.0px;width:310.0px;height:5.0px;background:#c9c7c7"></div>
<div class="abs" style="left:0.0px;top:368.0px;width:310.0px;height:190.0px;background:#357ab8"></div>
<div class="abs" style="left:0.0px;top:685.0px;width:310.0px;height:66.0px;background:#357ab8"></div>
<svg class="ic" style="left:90px;top:383px" width="131" height="101" viewBox="0 0 131 101">
<defs><linearGradient id="adg" x1="0" y1="0" x2="1" y2="0"><stop offset="0" stop-color="#1fa8ea"/><stop offset="0.22" stop-color="#8fd0ee"/><stop offset="0.5" stop-color="#e4ebee"/><stop offset="0.78" stop-color="#9ad6f2"/><stop offset="1" stop-color="#12a2ee"/></linearGradient>
<radialGradient id="blb" cx="0.45" cy="0.35" r="0.65"><stop offset="0" stop-color="#9ee8f6"/><stop offset="0.6" stop-color="#3fb2dc"/><stop offset="1" stop-color="#1576b4"/></radialGradient></defs>
<rect width="131" height="101" fill="url(#adg)"/>
<path d="M65 2.5c9 0 16.3 7.2 16.3 16.2 0 6-3.2 9.5-5.6 13.2-1.8 2.8-2.4 5.2-2.5 7.8H56.8c-.1-2.6-.7-5-2.5-7.8-2.4-3.7-5.6-7.2-5.6-13.2 0-9 7.3-16.2 16.3-16.2z" fill="url(#blb)"/>
<path d="M61 8c2 3 1 8 4 10s4-3 6-1M65 18v17" stroke="#d6f6fc" stroke-width="0.9" fill="none" opacity=".8"/>
<rect x="57" y="39.5" width="16" height="3.2" rx="1.2" fill="#1d2a3a"/><rect x="57.5" y="43" width="15" height="3.2" rx="1.2" fill="#25364a"/><rect x="58" y="46.5" width="14" height="3" rx="1.2" fill="#1d2a3a"/><path d="M60 49.5h10l-2 3h-6z" fill="#1d2a3a"/>
<text x="10" y="67.6" font-family="Liberation Sans" font-weight="700" font-size="15.5" fill="#13325a" textLength="110" lengthAdjust="spacingAndGlyphs">GOT AN <tspan fill="#1d3a9e">OPINION?</tspan></text>
<text x="10" y="80.1" font-family="Liberation Sans" font-weight="700" font-size="8.8" fill="#173a5c" textLength="105" lengthAdjust="spacingAndGlyphs">SHARE AND GET REWARDED.</text>
<rect x="44.8" y="84.8" width="86.2" height="16.2" fill="#fff"/>
<circle cx="58.3" cy="93" r="4.2" fill="#1b2aa8"/><text x="58.3" y="95.6" font-family="Liberation Sans" font-weight="700" font-size="6.5" fill="#fff" text-anchor="middle">R</text>
<text x="63.5" y="97.3" font-family="Liberation Sans" font-size="11.5" fill="#111" textLength="40" lengthAdjust="spacingAndGlyphs">Rakuten</text>
<text x="105" y="97.3" font-family="Liberation Sans" font-weight="700" font-size="11.5" fill="#1b2aa8" textLength="16.5" lengthAdjust="spacingAndGlyphs">AIP</text>
</svg>
<div class="abs" style="left:0.0px;top:497.0px;width:310px;text-align:center;white-space:nowrap;color:#f1f5fa;font-size:13.8px;line-height:17px">Have fun taking surveys</div>
<div class="abs" style="left:0.0px;top:515.0px;width:310px;text-align:center;white-space:nowrap;color:#f1f5fa;font-size:13.8px;line-height:17px">and get paid!</div>
<div class="abs" style="left:290.0px;top:377.0px;width:20.0px;height:60.0px;background:#0f3d6b"></div>
<svg class="ic" style="left:293px;top:398px" width="13" height="18" viewBox="0 0 13 18"><path d="M10 2L3 9l7 7" stroke="#fff" stroke-width="2.2" fill="none"/></svg>
<div class="abs" style="left:0.0px;top:690.0px;width:310px;text-align:center;white-space:nowrap;color:#eef3f8;font-size:12.5px;line-height:16px">About • FAQ • Blog • Terms of Use • Contact Us • GDB</div>
<div class="abs" style="left:4.0px;top:707.0px;width:301.0px;height:1.0px;background:#6b9dcc"></div>
<div class="abs" style="left:0.0px;top:710.0px;width:310px;text-align:center;white-space:nowrap;color:#eef3f8;font-size:12.5px;line-height:16px">Tutorial • Credits • Privacy</div>
<div class="abs" style="left:83.0px;top:727.0px;width:99.0px;height:1.0px;background:#6b9dcc"></div>
<div class="abs" style="left:0.0px;top:729.0px;width:310px;text-align:center;white-space:nowrap;color:#fff;font-size:14.2px;line-height:18px">© 2016 - 2023 GDB Online</div>
<div class="abs" style="left:310.0px;top:0.0px;width:1238.0px;height:28.0px;background:#cbcbcb"></div>
<div class="abs" style="left:315.0px;top:2.0px;width:33.0px;height:22.5px;background:#fff"></div>
<div class="abs" style="left:350.0px;top:2.0px;width:32.0px;height:22.5px;background:#fff"></div>
<div class="abs" style="left:387.0px;top:2.0px;width:65.0px;height:22.5px;background:#5cb85c"></div>
<div class="abs" style="left:387.0px;top:5.0px;width:65px;text-align:center;white-space:nowrap;color:#fff;font-size:13px;line-height:17px"><svg width="11" height="12" viewBox="0 0 11 12" style="vertical-align:-1px;margin-right:4px"><path d="M1 0.5l10 5.5-10 5.5z" fill="#fff"/></svg>Run</div>
<div class="abs" style="left:456.0px;top:2.0px;width:69.0px;height:22.5px;background:#337ab7"></div>
<div class="abs" style="left:456.0px;top:5.0px;width:69px;text-align:center;white-space:nowrap;color:#fff;font-size:13px;line-height:17px"><svg width="13" height="13" viewBox="0 0 13 13" style="vertical-align:-2px;margin-right:3px"><circle cx="6.5" cy="6.5" r="5.3" fill="none" stroke="#fff" stroke-width="1.6"/><path d="M5 3.8l4 2.7-4 2.7z" fill="#fff"/></svg>Debug</div>
<div class="abs" style="left:529.0px;top:2.0px;width:65.0px;height:22.5px;background:#e0837f"></div>
<div class="abs" style="left:529.0px;top:5.0px;width:65px;text-align:center;white-space:nowrap;color:#fff;font-size:13px;line-height:17px"><svg width="11" height="11" viewBox="0 0 11 11" style="vertical-align:-1px;margin-right:4px"><rect width="10" height="10" fill="#fff" opacity=".9"/></svg>Stop</div>
<div class="abs" style="left:599.0px;top:2.0px;width:65.0px;height:22.5px;background:#f0ad4e"></div>
<div class="abs" style="left:599.0px;top:5.0px;width:65px;text-align:center;white-space:nowrap;color:#fff;font-size:13px;line-height:17px"><svg width="14" height="13" viewBox="0 0 14 13" style="vertical-align:-1px;margin-right:3px"><path d="M6 2H2v9h9V8" stroke="#fff" stroke-width="2" fill="none"/><path d="M5 8c0-3 2-5 5-5V0.5l4 3.5-4 3.5V5C8 5 6 6 5 8z" fill="#fff"/></svg>Share</div>
<div class="abs" style="left:668.0px;top:2.0px;width:65.0px;height:22.5px;background:#337ab7"></div>
<div class="abs" style="left:668.0px;top:5.0px;width:65px;text-align:center;white-space:nowrap;color:#fff;font-size:13px;line-height:17px"><svg width="13" height="13" viewBox="0 0 13 13" style="vertical-align:-1px;margin-right:4px"><path d="M0 0h10l3 3v10H0z" fill="#fff"/><rect x="3" y="0" width="6" height="4" fill="#337ab7"/><rect x="3" y="8" width="7" height="5" fill="#337ab7"/></svg>Save</div>
<div class="abs" style="left:737.0px;top:2.0px;width:78.0px;height:22.5px;background:#5bc0de"></div>
<div class="abs" style="left:737.0px;top:5.0px;width:78px;text-align:center;white-space:nowrap;color:#fff;font-size:13px;line-height:17px">{ } Beautify</div>
<div class="abs" style="left:818.0px;top:2.0px;width:66.0px;height:22.5px;background:#5bc0de"></div>
<svg class="ic" style="left:325px;top:5px" width="13" height="15" viewBox="0 0 13 15"><path d="M0 0h8l5 5v10H0z" fill="#222"/><path d="M8 0v5h5" fill="#fff" stroke="#222" stroke-width="0.8"/></svg>
<svg class="ic" style="left:357px;top:5px" width="18" height="15" viewBox="0 0 18 15"><path d="M4 11a3.5 3.5 0 0 1 0-7 5 5 0 0 1 9.5-1 4 4 0 0 1 .5 8z" fill="#222"/><path d="M9 6l-3.5 3.5h2.3V15h2.4V9.5h2.3z" fill="#fff"/><path d="M9 6.8l-2.3 2.3h1.5V15h1.6V9.1h1.5z" fill="#222"/></svg>
<svg class="ic" style="left:843px;top:5px" width="16" height="16" viewBox="0 0 16 16"><path d="M6 0h4v7h3.5L8 12.5 2.5 7H6z" fill="#fff"/><rect x="1" y="13" width="14" height="3" fill="#fff"/></svg>
<div class="abs" style="left:1272.0px;top:5.5px;white-space:nowrap;color:#2b2b2b;font-size:13.9px;line-height:17px">Language</div>
<div class="abs" style="left:1339.0px;top:2.5px;width:89.5px;height:25.0px;background:#fff"></div>
<div class="abs" style="left:1344.0px;top:6.0px;white-space:nowrap;color:#555;font-size:13.9px;line-height:17px">Python 3</div>
<svg class="ic" style="left:1414px;top:12px" width="11" height="7" viewBox="0 0 11 7"><path d="M1 1l4.5 4.5L10 1" stroke="#333" stroke-width="1.6" fill="none"/></svg>
<div class="abs" style="left:1432.6px;top:4.0px;width:28.4px;height:24.0px;background:#f0ad4e"></div>
<div class="abs" style="left:1465.0px;top:4.0px;width:27.5px;height:24.0px;background:#f0ad4e"></div>
<svg class="ic" style="left:1439.5px;top:8.5px" width="15" height="15" viewBox="0 0 15 15"><circle cx="7.5" cy="7.5" r="7" fill="#fff"/><circle cx="7.5" cy="4" r="1.3" fill="#f0ad4e"/><path d="M6 6.5h2.5v4.5H9.5v1h-4v-1h1V7.5H6z" fill="#f0ad4e"/></svg>
<svg class="ic" style="left:1471.5px;top:8.5px" width="15" height="15" viewBox="0 0 15 15"><g fill="#fff"><circle cx="7.5" cy="7.5" r="5"/><g transform="translate(7.5 7.5)"><rect x="-1.5" y="-7.5" width="3" height="15"/><rect x="-1.5" y="-7.5" width="3" height="15" transform="rotate(45)"/><rect x="-1.5" y="-7.5" width="3" height="15" transform="rotate(90)"/><rect x="-1.5" y="-7.5" width="3" height="15" transform="rotate(135)"/></g></g><circle cx="7.5" cy="7.5" r="2.2" fill="#f0ad4e"/></svg>
<div class="abs" style="left:310.0px;top:28.0px;width:1238.0px;height:23.9px;background:#777"></div>
<div class="abs" style="left:310.0px;top:28.0px;width:100.0px;height:23.9px;background:#337ab7"></div>
<div class="abs" style="left:315.0px;top:32.5px;white-space:nowrap;color:#fff;font-size:13px;line-height:16px">main.py</div>
<div class="abs" style="left:310.0px;top:51.9px;width:1238.0px;height:1.4px;background:#b3b3b3"></div>
<div class="abs" style="left:310.0px;top:51.9px;width:100.0px;height:1.4px;background:#a9c8e6"></div>
<div class="abs" style="left:310.0px;top:53.3px;width:1238.0px;height:409.7px;background:#333333"></div>
<div class="abs" style="left:310.0px;top:53.3px;width:51.5px;height:409.7px;background:#3b3b3b"></div>
<div class="abs" style="left:1074.0px;top:53.3px;width:1.5px;height:409.7px;background:#393939"></div>
<div class="abs" style="left:310.0px;top:53.3px;width:51.5px;height:18.3px;background:#363636"></div>
<div class="abs" style="left:361.5px;top:53.3px;width:1186.5px;height:18.3px;background:#363739"></div>
<div class="abs" style="left:310.0px;top:53.5px;width:38px;white-space:nowrap;color:#a8a8a8;font-family:'Liberation Mono',monospace;font-size:14.6px;line-height:18.18px;text-align:right">1</div>
<div class="abs" style="left:310.0px;top:71.7px;width:38px;white-space:nowrap;color:#a8a8a8;font-family:'Liberation Mono',monospace;font-size:14.6px;line-height:18.18px;text-align:right">2</div>
<div class="abs" style="left:310.0px;top:89.9px;width:38px;white-space:nowrap;color:#a8a8a8;font-family:'Liberation Mono',monospace;font-size:14.6px;line-height:18.18px;text-align:right">3</div>
<div class="abs" style="left:310.0px;top:108.0px;width:38px;white-space:nowrap;color:#a8a8a8;font-family:'Liberation Mono',monospace;font-size:14.6px;line-height:18.18px;text-align:right">4</div>
<div class="abs" style="left:310.0px;top:126.2px;width:38px;white-space:nowrap;color:#a8a8a8;font-family:'Liberation Mono',monospace;font-size:14.6px;line-height:18.18px;text-align:right">5</div>
<div class="abs" style="left:310.0px;top:144.4px;width:38px;white-space:nowrap;color:#a8a8a8;font-family:'Liberation Mono',monospace;font-size:14.6px;line-height:18.18px;text-align:right">6</div>
<div class="abs" style="left:310.0px;top:162.6px;width:38px;white-space:nowrap;color:#a8a8a8;font-family:'Liberation Mono',monospace;font-size:14.6px;line-height:18.18px;text-align:right">7</div>
<div class="abs" style="left:310.0px;top:180.8px;width:38px;white-space:nowrap;color:#a8a8a8;font-family:'Liberation Mono',monospace;font-size:14.6px;line-height:18.18px;text-align:right">8</div>
<div class="abs" style="left:310.0px;top:198.9px;width:38px;white-space:nowrap;color:#a8a8a8;font-family:'Liberation Mono',monospace;font-size:14.6px;line-height:18.18px;text-align:right">9</div>
<div class="abs" style="left:310.0px;top:217.1px;width:38px;white-space:nowrap;color:#a8a8a8;font-family:'Liberation Mono',monospace;font-size:14.6px;line-height:18.18px;text-align:right">10</div>
<div class="abs" style="left:310.0px;top:235.3px;width:38px;white-space:nowrap;color:#a8a8a8;font-family:'Liberation Mono',monospace;font-size:14.6px;line-height:18.18px;text-align:right">11</div>
<div class="abs" style="left:310.0px;top:253.5px;width:38px;white-space:nowrap;color:#a8a8a8;font-family:'Liberation Mono',monospace;font-size:14.6px;line-height:18.18px;text-align:right">12</div>
<div class="abs" style="left:310.0px;top:271.7px;width:38px;white-space:nowrap;color:#a8a8a8;font-family:'Liberation Mono',monospace;font-size:14.6px;line-height:18.18px;text-align:right">13</div>
<div class="abs" style="left:310.0px;top:289.8px;width:38px;white-space:nowrap;color:#a8a8a8;font-family:'Liberation Mono',monospace;font-size:14.6px;line-height:18.18px;text-align:right">14</div>
<div class="abs" style="left:310.0px;top:308.0px;width:38px;white-space:nowrap;color:#a8a8a8;font-family:'Liberation Mono',monospace;font-size:14.6px;line-height:18.18px;text-align:right">15</div>
<div class="abs" style="left:310.0px;top:326.2px;width:38px;white-space:nowrap;color:#a8a8a8;font-family:'Liberation Mono',monospace;font-size:14.6px;line-height:18.18px;text-align:right">16</div>
<div class="abs" style="left:310.0px;top:344.4px;width:38px;white-space:nowrap;color:#a8a8a8;font-family:'Liberation Mono',monospace;font-size:14.6px;line-height:18.18px;text-align:right">17</div>
<div class="abs" style="left:310.0px;top:362.6px;width:38px;white-space:nowrap;color:#a8a8a8;font-family:'Liberation Mono',monospace;font-size:14.6px;line-height:18.18px;text-align:right">18</div>
<svg class="ic" style="left:352.5px;top:61.0px" width="6" height="4" viewBox="0 0 6 4"><path d="M0 0h6L3 4z" fill="#777"/></svg>
<svg class="ic" style="left:352.5px;top:115.54000000000002px" width="6" height="4" viewBox="0 0 6 4"><path d="M0 0h6L3 4z" fill="#777"/></svg>
<svg class="ic" style="left:352.5px;top:133.72000000000003px" width="6" height="4" viewBox="0 0 6 4"><path d="M0 0h6L3 4z" fill="#777"/></svg>
<svg class="ic" style="left:352.5px;top:170.07999999999998px" width="6" height="4" viewBox="0 0 6 4"><path d="M0 0h6L3 4z" fill="#777"/></svg>
<div class="abs" style="left:365.5px;top:53.5px;white-space:nowrap;white-space:pre;-webkit-text-stroke:0.3px currentColor;font-family:'Liberation Mono',monospace;font-size:14.6px;line-height:18.18px;letter-spacing:0.090px"><span style="color:#cc7833">def</span><span style="color:#ffffff"> </span><span style="color:#ffc66d">gray_to_binary</span><span style="color:#ffffff">(gray_code):</span></div>
<div class="abs" style="left:365.5px;top:71.7px;white-space:nowrap;white-space:pre;-webkit-text-stroke:0.3px currentColor;font-family:'Liberation Mono',monospace;font-size:14.6px;line-height:18.18px;letter-spacing:0.090px"><span style="color:#ffffff">    binary_code </span><span style="color:#cc7833">=</span><span style="color:#ffffff"> gray_code[</span><span style="color:#6c99bb">0</span><span style="color:#ffffff">]</span></div>
<div class="abs" style="left:365.5px;top:89.9px;white-space:nowrap;white-space:pre;-webkit-text-stroke:0.3px currentColor;font-family:'Liberation Mono',monospace;font-size:14.6px;line-height:18.18px;letter-spacing:0.090px"></div>
<div class="abs" style="left:365.5px;top:108.0px;white-space:nowrap;white-space:pre;-webkit-text-stroke:0.3px currentColor;font-family:'Liberation Mono',monospace;font-size:14.6px;line-height:18.18px;letter-spacing:0.090px"><span style="color:#ffffff">    </span><span style="color:#cc7833">for</span><span style="color:#ffffff"> i </span><span style="color:#cc7833">in</span><span style="color:#ffffff"> </span><span style="color:#c2453a">range</span><span style="color:#ffffff">(</span><span style="color:#6c99bb">1</span><span style="color:#ffffff">, </span><span style="color:#c2453a">len</span><span style="color:#ffffff">(gray_code)):</span></div>
<div class="abs" style="left:365.5px;top:126.2px;white-space:nowrap;white-space:pre;-webkit-text-stroke:0.3px currentColor;font-family:'Liberation Mono',monospace;font-size:14.6px;line-height:18.18px;letter-spacing:0.090px"><span style="color:#ffffff">        </span><span style="color:#cc7833">if</span><span style="color:#ffffff"> gray_code[i] </span><span style="color:#cc7833">==</span><span style="color:#ffffff"> </span><span style="color:#a5c261">&#x27;0&#x27;</span><span style="color:#ffffff">:</span></div>
<div class="abs" style="left:365.5px;top:144.4px;white-space:nowrap;white-space:pre;-webkit-text-stroke:0.3px currentColor;font-family:'Liberation Mono',monospace;font-size:14.6px;line-height:18.18px;letter-spacing:0.090px"><span style="color:#ffffff">            binary_code </span><span style="color:#cc7833">+=</span><span style="color:#ffffff"> binary_code[i</span><span style="color:#cc7833">-</span><span style="color:#6c99bb">1</span><span style="color:#ffffff">]</span></div>
<div class="abs" style="left:365.5px;top:162.6px;white-space:nowrap;white-space:pre;-webkit-text-stroke:0.3px currentColor;font-family:'Liberation Mono',monospace;font-size:14.6px;line-height:18.18px;letter-spacing:0.090px"><span style="color:#ffffff">        </span><span style="color:#cc7833">else</span><span style="color:#ffffff">:</span></div>
<div class="abs" style="left:365.5px;top:180.8px;white-space:nowrap;white-space:pre;-webkit-text-stroke:0.3px currentColor;font-family:'Liberation Mono',monospace;font-size:14.6px;line-height:18.18px;letter-spacing:0.090px"><span style="color:#ffffff">            binary_code </span><span style="color:#cc7833">+=</span><span style="color:#ffffff"> </span><span style="color:#c2453a">str</span><span style="color:#ffffff">(</span><span style="color:#6c99bb">1</span><span style="color:#ffffff"> </span><span style="color:#cc7833">-</span><span style="color:#ffffff"> </span><span style="color:#c2453a">int</span><span style="color:#ffffff">(binary_code[i</span><span style="color:#cc7833">-</span><span style="color:#6c99bb">1</span><span style="color:#ffffff">]))</span></div>
<div class="abs" style="left:365.5px;top:198.9px;white-space:nowrap;white-space:pre;-webkit-text-stroke:0.3px currentColor;font-family:'Liberation Mono',monospace;font-size:14.6px;line-height:18.18px;letter-spacing:0.090px"></div>
<div class="abs" style="left:365.5px;top:217.1px;white-space:nowrap;white-space:pre;-webkit-text-stroke:0.3px currentColor;font-family:'Liberation Mono',monospace;font-size:14.6px;line-height:18.18px;letter-spacing:0.090px"><span style="color:#ffffff">    </span><span style="color:#cc7833">return</span><span style="color:#ffffff"> binary_code</span></div>
<div class="abs" style="left:365.5px;top:235.3px;white-space:nowrap;white-space:pre;-webkit-text-stroke:0.3px currentColor;font-family:'Liberation Mono',monospace;font-size:14.6px;line-height:18.18px;letter-spacing:0.090px"></div>
<div class="abs" style="left:365.5px;top:253.5px;white-space:nowrap;white-space:pre;-webkit-text-stroke:0.3px currentColor;font-family:'Liberation Mono',monospace;font-size:14.6px;line-height:18.18px;letter-spacing:0.090px"></div>
<div class="abs" style="left:365.5px;top:271.7px;white-space:nowrap;white-space:pre;-webkit-text-stroke:0.3px currentColor;font-family:'Liberation Mono',monospace;font-size:14.6px;line-height:18.18px;letter-spacing:0.090px"><span style="color:#bc9458;font-style:italic"># Test the program</span></div>
<div class="abs" style="left:365.5px;top:289.8px;white-space:nowrap;white-space:pre;-webkit-text-stroke:0.3px currentColor;font-family:'Liberation Mono',monospace;font-size:14.6px;line-height:18.18px;letter-spacing:0.090px"><span style="color:#ffffff">gray_code </span><span style="color:#cc7833">=</span><span style="color:#ffffff"> </span><span style="color:#c2453a">input</span><span style="color:#ffffff">(</span><span style="color:#a5c261">&quot;Enter the Gray code: &quot;</span><span style="color:#ffffff">)</span></div>
<div class="abs" style="left:365.5px;top:308.0px;white-space:nowrap;white-space:pre;-webkit-text-stroke:0.3px currentColor;font-family:'Liberation Mono',monospace;font-size:14.6px;line-height:18.18px;letter-spacing:0.090px"><span style="color:#ffffff">binary_code </span><span style="color:#cc7833">=</span><span style="color:#ffffff"> gray_to_binary(gray_code)</span></div>
<div class="abs" style="left:365.5px;top:326.2px;white-space:nowrap;white-space:pre;-webkit-text-stroke:0.3px currentColor;font-family:'Liberation Mono',monospace;font-size:14.6px;line-height:18.18px;letter-spacing:0.090px"></div>
<div class="abs" style="left:365.5px;top:344.4px;white-space:nowrap;white-space:pre;-webkit-text-stroke:0.3px currentColor;font-family:'Liberation Mono',monospace;font-size:14.6px;line-height:18.18px;letter-spacing:0.090px"><span style="color:#cc7833">print</span><span style="color:#ffffff">(</span><span style="color:#a5c261">f&quot;Binary code: </span><span style="color:#ffffff">{binary_code}</span><span style="color:#a5c261">&quot;</span><span style="color:#ffffff">)</span></div>
<div class="abs" style="left:365.5px;top:362.6px;white-space:nowrap;white-space:pre;-webkit-text-stroke:0.3px currentColor;font-family:'Liberation Mono',monospace;font-size:14.6px;line-height:18.18px;letter-spacing:0.090px"></div>
<div class="abs" style="left:400.5px;top:126.2px;width:1.0px;height:18.2px;background:repeating-linear-gradient(#555 0 1px,transparent 1px 3px);opacity:.6"></div>
<div class="abs" style="left:400.5px;top:144.4px;width:1.0px;height:18.2px;background:repeating-linear-gradient(#555 0 1px,transparent 1px 3px);opacity:.6"></div>
<div class="abs" style="left:400.5px;top:162.6px;width:1.0px;height:18.2px;background:repeating-linear-gradient(#555 0 1px,transparent 1px 3px);opacity:.6"></div>
<div class="abs" style="left:400.5px;top:180.8px;width:1.0px;height:18.2px;background:repeating-linear-gradient(#555 0 1px,transparent 1px 3px);opacity:.6"></div>
<div class="abs" style="left:436.0px;top:144.4px;width:1.0px;height:18.2px;background:repeating-linear-gradient(#555 0 1px,transparent 1px 3px);opacity:.6"></div>
<div class="abs" style="left:436.0px;top:180.8px;width:1.0px;height:18.2px;background:repeating-linear-gradient(#555 0 1px,transparent 1px 3px);opacity:.6"></div>
<div class="abs" style="left:364.8px;top:53.4px;width:1.8px;height:18.2px;background:#91ff00"></div>
<div class="abs" style="left:883.5px;top:174.3px;white-space:nowrap;font-family:'Liberation Serif',serif;font-weight:400;-webkit-text-stroke:0.75px #fff;font-size:24px;line-height:26px;color:#fff;text-shadow:1.5px 2px 3px rgba(0,0,0,.6)">Developer Publish.com</div>
<div class="abs" style="left:310.0px;top:463.0px;width:1238.0px;height:6.0px;background:#c0c0c0"></div>
<div class="abs" style="left:310.0px;top:469.0px;width:1238.0px;height:20.0px;background:#fff"></div>
<svg class="ic" style="left:319px;top:473px" width="15" height="11" viewBox="0 0 15 11"><path d="M2 2.2l5.5 5.5 5.5-5.5" stroke="#2e2e2e" stroke-width="3.2" fill="none"/></svg>
<svg class="ic" style="left:349px;top:470px" width="17" height="17" viewBox="0 0 17 17"><g stroke="#2e2e2e" stroke-width="2.3"><path d="M10.3 6.7L14.5 2.5"/><path d="M6.7 10.3L2.5 14.5"/></g><path d="M16.3 0.7V6.8L10.2 0.7z" fill="#2e2e2e"/><path d="M0.7 16.3V10.2L6.8 16.3z" fill="#2e2e2e"/></svg>
<svg class="ic" style="left:380px;top:471px" width="14" height="16" viewBox="0 0 14 16"><path d="M4.3 3H13.7V14.8H4.3V14.2L7 12.2L4.3 10.2z" fill="#2e2e2e"/><rect x="7" y="0.8" width="4" height="3" rx="0.8" fill="#2e2e2e"/><rect x="6" y="4" width="6" height="1.2" fill="#d8d8d8"/><rect x="0.6" y="11.4" width="3" height="1.7" fill="#2e2e2e"/><path d="M3 9.6L5.6 12.2L3 14.8z" fill="#2e2e2e"/></svg>
<div class="abs" style="left:913.0px;top:469.5px;white-space:nowrap;color:#333;font-size:13px;-webkit-text-stroke:0.35px #333;line-height:16px">input</div>
<div class="abs" style="left:310.0px;top:489.0px;width:1221.0px;height:260.0px;background:#000"></div>
<div class="abs" style="left:1531.0px;top:489.0px;width:17.0px;height:260.0px;background:#f0f0f0"></div>
<div class="abs" style="left:1548.0px;top:28.0px;width:1.0px;height:723.0px;background:#bdbdbd"></div>
<svg class="ic" style="left:1535.5px;top:494px" width="8" height="5" viewBox="0 0 8 5"><path d="M0 5L4 0l4 5z" fill="#a3a3a3"/></svg>
<svg class="ic" style="left:1535.5px;top:737px" width="8" height="5" viewBox="0 0 8 5"><path d="M0 0l4 5 4-5z" fill="#a3a3a3"/></svg>
<div class="abs" style="left:310.0px;top:749.0px;width:1238.0px;height:2.0px;background:#e9e9e9"></div>
<div class="abs" style="left:310.5px;top:488.5px;white-space:nowrap;color:#e8e8e8;font-family:'Liberation Mono',monospace;font-weight:400;font-size:14.7px;line-height:18.6px">Enter the Gray code: 1010</div>
<div class="abs" style="left:310.5px;top:507.1px;white-space:nowrap;color:#e8e8e8;font-family:'Liberation Mono',monospace;font-weight:400;font-size:14.7px;line-height:18.6px">Binary code: 1100</div>
<div class="abs" style="left:310.5px;top:562.9px;white-space:nowrap;color:#7fd03c;font-family:'Liberation Mono',monospace;font-weight:700;font-size:14.7px;line-height:18.6px">...Program finished with exit code 0</div>
<div class="abs" style="left:310.5px;top:581.5px;white-space:nowrap;color:#7fd03c;font-family:'Liberation Mono',monospace;font-weight:700;font-size:14.7px;line-height:18.6px">Press ENTER to exit console.</div>
<div class="abs" style="left:558.5px;top:582.0px;width:9.0px;height:17.0px;border:1px solid #ddd"></div>
</div>
<svg class="ic" style="left:1864px;top:965px" width="50" height="50" viewBox="0 0 50 50"><circle cx="25" cy="25" r="25" fill="#1a6cfb"/><path d="M18.2 17.5C18.2 13.2 21.2 11 25.3 11C29.5 11 32.6 13.5 32.6 17C32.6 20.5 30 21.8 28 23C26 24.3 25.2 25.2 25.2 27.5" fill="none" stroke="#fff" stroke-width="6" stroke-linecap="round"/><circle cx="24.6" cy="34.6" r="4.2" fill="#fff"/></svg>
<div class="taskbar"></div>
<svg class="ic" style="left:22px;top:1034px" width="34" height="32" viewBox="0 0 34 32"><defs><linearGradient id="sun42" x1="0" y1="0" x2="0" y2="1"><stop offset="0" stop-color="#ffc21a"/><stop offset="1" stop-color="#f07b12"/></linearGradient></defs><circle cx="17" cy="16" r="12" fill="url(#sun42)"/><g stroke-linecap="round" stroke-width="2.8" stroke="#f3dfb0"><path d="M12 8h16M8 13h22M4 19h14M21 19h5M6 24h18"/></g></svg>
<div class="tb-txt" style="left:65px;top:1031px;font-size:15.5px">32°C</div>
<div class="tb-txt" style="left:65px;top:1051px;font-size:15.5px;color:#dcdcdc">Haze</div>
<svg class="ic" style="left:585px;top:1036px" width="29" height="29" viewBox="0 0 29 29"><defs><linearGradient id="win42" x1="0" y1="0" x2="1" y2="1"><stop offset="0" stop-color="#7fdcff"/><stop offset="1" stop-color="#0a8df0"/></linearGradient></defs><g fill="url(#win42)"><rect x="0" y="0" width="13.5" height="13.5" rx="1"/><rect x="15.5" y="0" width="13.5" height="13.5" rx="1"/><rect x="0" y="15.5" width="13.5" height="13.5" rx="1"/><rect x="15.5" y="15.5" width="13.5" height="13.5" rx="1"/></g></svg>
<div class="abs" style="left:631px;top:1030px;width:275px;height:40px;border-radius:20px;background:linear-gradient(90deg,#34383b,#3c3d3f);border:1px solid #3f4244"></div>
<svg class="ic" style="left:644px;top:1039px" width="22" height="22" viewBox="0 0 22 22"><circle cx="12.5" cy="9.5" r="6.6" fill="#4e5052" stroke="#e6e6e6" stroke-width="1.8"/><path d="M8.5 13.5L3 19" stroke="#e6e6e6" stroke-width="2.4" stroke-linecap="round"/></svg>
<div class="tb-txt" style="left:677px;top:1041px;font-size:18.5px;color:#e0e0e0;transform:scaleX(0.865);transform-origin:0 0">Search</div>
<svg class="ic" style="left:921px;top:1035px" width="30" height="29" viewBox="0 0 30 29"><rect x="0" y="9" width="20" height="20" rx="2" fill="#6a6a6a"/><rect x="10" y="0" width="20" height="20" rx="2" fill="#f2f2f2"/><rect x="10" y="9" width="10" height="11" fill="#b9b9b9"/></svg>
<svg class="ic" style="left:976px;top:1035px" width="29" height="29" viewBox="0 0 29 29"><defs><linearGradient id="tm42" x1="0" y1="0" x2="1" y2="1"><stop offset="0" stop-color="#8a7ce8"/><stop offset="1" stop-color="#5a4fc8"/></linearGradient></defs><path d="M15 1a13.5 13.5 0 1 1-7 25L1.5 28l2-6A13.5 13.5 0 0 1 15 1z" fill="url(#tm42)"/><rect x="8" y="9.5" width="10" height="10" rx="2" fill="#fff"/><path d="M18.5 14l4.5-3.5v9L18.5 16z" fill="#fff"/></svg>
<svg class="ic" style="left:1031px;top:1035px" width="30" height="30" viewBox="0 0 30 30"><defs><linearGradient id="eg142" x1="0" y1="0.2" x2="1" y2="0.7"><stop offset="0" stop-color="#30b3f3"/><stop offset=".5" stop-color="#2ec5c4"/><stop offset="1" stop-color="#6ee55a"/></linearGradient><linearGradient id="eg242" x1="0" y1="0" x2="0.4" y2="1"><stop offset="0" stop-color="#1f9be9"/><stop offset="1" stop-color="#0f73d6"/></linearGradient></defs><circle cx="15" cy="15" r="14.8" fill="url(#eg142)"/><path d="M12 15.3A3 3 0 0 1 18 15.3C18 16 17.8 16.6 17.5 17C19.5 19.5 23 20.3 28.6 19.6L27.8 21.8C23.5 23.6 19.5 23.8 16.8 22.2C14.5 20.8 13.3 19 12.6 17.2C12.2 16.6 12 16 12 15.3z" fill="#1f1f1f"/><path d="M0.2 16.5C0.2 10 4.5 7 9.2 7C13 7 15.3 9.5 15.3 12.3C13.5 12.3 12 13.6 12 15.3C12 16 12.2 16.6 12.6 17.2C13.3 19 14.5 20.8 16.8 22.2C19.5 23.8 23.5 23.6 27.8 21.8C25 27 20.2 29.8 15 29.8C6.8 29.8 0.2 23.5 0.2 16.5z" fill="url(#eg242)"/><path d="M11 11C7.5 11 4.6 14.2 4.6 18.8C4.6 24.2 9.4 28.6 15.4 28.6C20.2 28.6 24.4 26 27.8 21.8C23.5 23.6 19.5 23.8 16.8 22.2C14.5 20.8 13.3 19 12.6 17.2C12.2 16.6 12 16 12 15.3C12 13.8 12.8 12.6 13.8 12.2C13 11.4 12 11 11 11z" fill="#0c57a6"/></svg>
<svg class="ic" style="left:1086px;top:1036px" width="30" height="28" viewBox="0 0 30 28"><path d="M0 2.2A1.5 1.5 0 0 1 1.5 0.8H11l3 3.2H28.5A1.5 1.5 0 0 1 30 5.5V9H0z" fill="#e3a20a"/><path d="M0 5A1.2 1.2 0 0 1 1.2 3.8H12.5L14.5 4.3H28.8A1.2 1.2 0 0 1 30 5.5V26.2A1.2 1.2 0 0 1 28.8 27.4H1.2A1.2 1.2 0 0 1 0 26.2z" fill="#ffc83d"/><path d="M5 22A2 2 0 0 1 7 20H23A2 2 0 0 1 25 22V27.4H5z" fill="#1283e0"/><rect x="8.5" y="23" width="13" height="1.6" rx="0.8" fill="#0a4fa0"/></svg>
<svg class="ic" style="left:1141px;top:1035px" width="30" height="30" viewBox="0 0 30 30"><rect width="30" height="30" fill="#0061fe"/><path d="M5.7 10.6L10.4 7.699999999999999L15.1 10.6L10.4 13.5zM15.1 10.6L19.8 7.699999999999999L24.5 10.6L19.8 13.5zM5.7 16.3L10.4 13.4L15.1 16.3L10.4 19.2zM15.1 16.3L19.8 13.4L24.5 16.3L19.8 19.2zM10.4 20.6L15.1 17.700000000000003L19.8 20.6L15.1 23.5z" fill="#fff"/></svg>
<svg class="ic" style="left:1196px;top:1035px" width="30" height="29" viewBox="0 0 30 29"><defs><linearGradient id="ml42" x1="1" y1="0" x2="0" y2="1"><stop offset="0" stop-color="#3bc8f5"/><stop offset="0.6" stop-color="#22a8ea"/><stop offset="1" stop-color="#1590de"/></linearGradient></defs><path d="M0 10L15 1.5L30 10z" fill="#0b63b6"/><path d="M1.5 10.5H20L27 14.5L15 20z" fill="#f0f0f0"/><path d="M0 10L15 19.5L30 10V29H0z" fill="url(#ml42)"/><path d="M15 19.5L30 29H0z" fill="#1a9ae2" opacity="0.35"/></svg>
<div class="abs" style="left:1209px;top:1029px;width:25px;height:20px;border-radius:10px;background:#4cc2ff;color:#111;font-size:15px;line-height:20px;text-align:center">25</div>
<div class="abs" style="left:1251px;top:1035px;width:30px;height:30px;background:#0a95d6;border-radius:2px"></div>
<div class="tb-txt" style="left:1253px;top:1039.5px;font-size:11px;color:#f4f9fc;letter-spacing:-0.6px;transform:scaleY(1.15);transform-origin:0 0">my<span style="font-style:italic;font-size:13.5px;letter-spacing:-0.3px">hp</span></div>
<div class="abs" style="left:1297px;top:1025px;width:49px;height:50px;border-radius:5px;background:#2c2c2c;border:1px solid #353535"></div>
<svg class="ic" style="left:1306px;top:1035px" width="30" height="30" viewBox="0 0 30 30"><circle cx="15" cy="15" r="15" fill="#db4437"/><path d="M15 15L27.99 7.5A15 15 0 0 1 15 30z" fill="#f6c026"/><path d="M15 15L15 30A15 15 0 0 1 2.01 7.5z" fill="#1f9d55"/><circle cx="15" cy="15" r="7.6" fill="#fff"/><circle cx="15" cy="15" r="6.2" fill="#2f7bea"/></svg>
<div class="abs" style="left:1322px;top:1029px;width:20px;height:20px;border-radius:50%;background:#8b6c62;color:#ddd2cc;font-size:12.5px;font-weight:700;line-height:20px;text-align:center">S</div>
<div class="abs" style="left:1311px;top:1070px;width:20px;height:4px;border-radius:2px;background:#4cc2ff"></div>
<svg class="ic" style="left:1602px;top:1045px" width="17" height="10" viewBox="0 0 17 10"><path d="M1 9l7.5-7.5L16 9" stroke="#fff" stroke-width="1.3" fill="none"/></svg>
<div class="tb-txt" style="left:1638px;top:1031px;font-size:15px;text-align:center;width:30px">ENG</div>
<div class="tb-txt" style="left:1638px;top:1051px;font-size:15px;text-align:center;width:30px">IN</div>
<svg class="ic" style="left:1689px;top:1041px" width="22" height="17" viewBox="0 0 22 17"><g fill="none" stroke="#fff" stroke-width="1.7" stroke-linecap="round"><path d="M1.5 6.5a13 13 0 0 1 19 0"/><path d="M4.8 9.8a8.5 8.5 0 0 1 12.4 0"/><path d="M8 13a4 4 0 0 1 6 0"/></g><circle cx="11" cy="15.3" r="1.5" fill="#fff"/></svg>
<svg class="ic" style="left:1719px;top:1039px" width="22" height="20" viewBox="0 0 22 20"><path d="M1.5 7h3.5l5-4.5v15L5 13H1.5z" fill="none" stroke="#fff" stroke-width="1.5" stroke-linejoin="round"/><g fill="none" stroke="#fff" stroke-width="1.5" stroke-linecap="round"><path d="M13 7.5a3.5 3.5 0 0 1 0 5"/><path d="M15.5 5a7 7 0 0 1 0 10"/><path d="M18 2.5a10.5 10.5 0 0 1 0 15"/></g></svg>
<svg class="ic" style="left:1749px;top:1042px" width="23" height="14" viewBox="0 0 23 14"><rect x="1" y="1" width="18" height="12" rx="2.5" fill="none" stroke="#fff" stroke-width="1.6"/><rect x="3.5" y="3.5" width="13" height="7" rx="1" fill="#fff"/><rect x="19.5" y="4.5" width="2.5" height="5" rx="0.8" fill="#fff"/></svg>
<div class="tb-txt" style="left:1790px;top:1030px;width:77px;text-align:right;font-size:15px">03:42</div>
<div class="tb-txt" style="left:1790px;top:1049.5px;width:77px;text-align:right;font-size:15px">22-06-2023</div>
<div class="abs" style="left:1876px;top:1040px;width:20px;height:20px;border-radius:50%;background:#4cc2ff;color:#0b1a26;font-size:13px;line-height:20px;text-align:center">1</div>
</div>
</body></html>
